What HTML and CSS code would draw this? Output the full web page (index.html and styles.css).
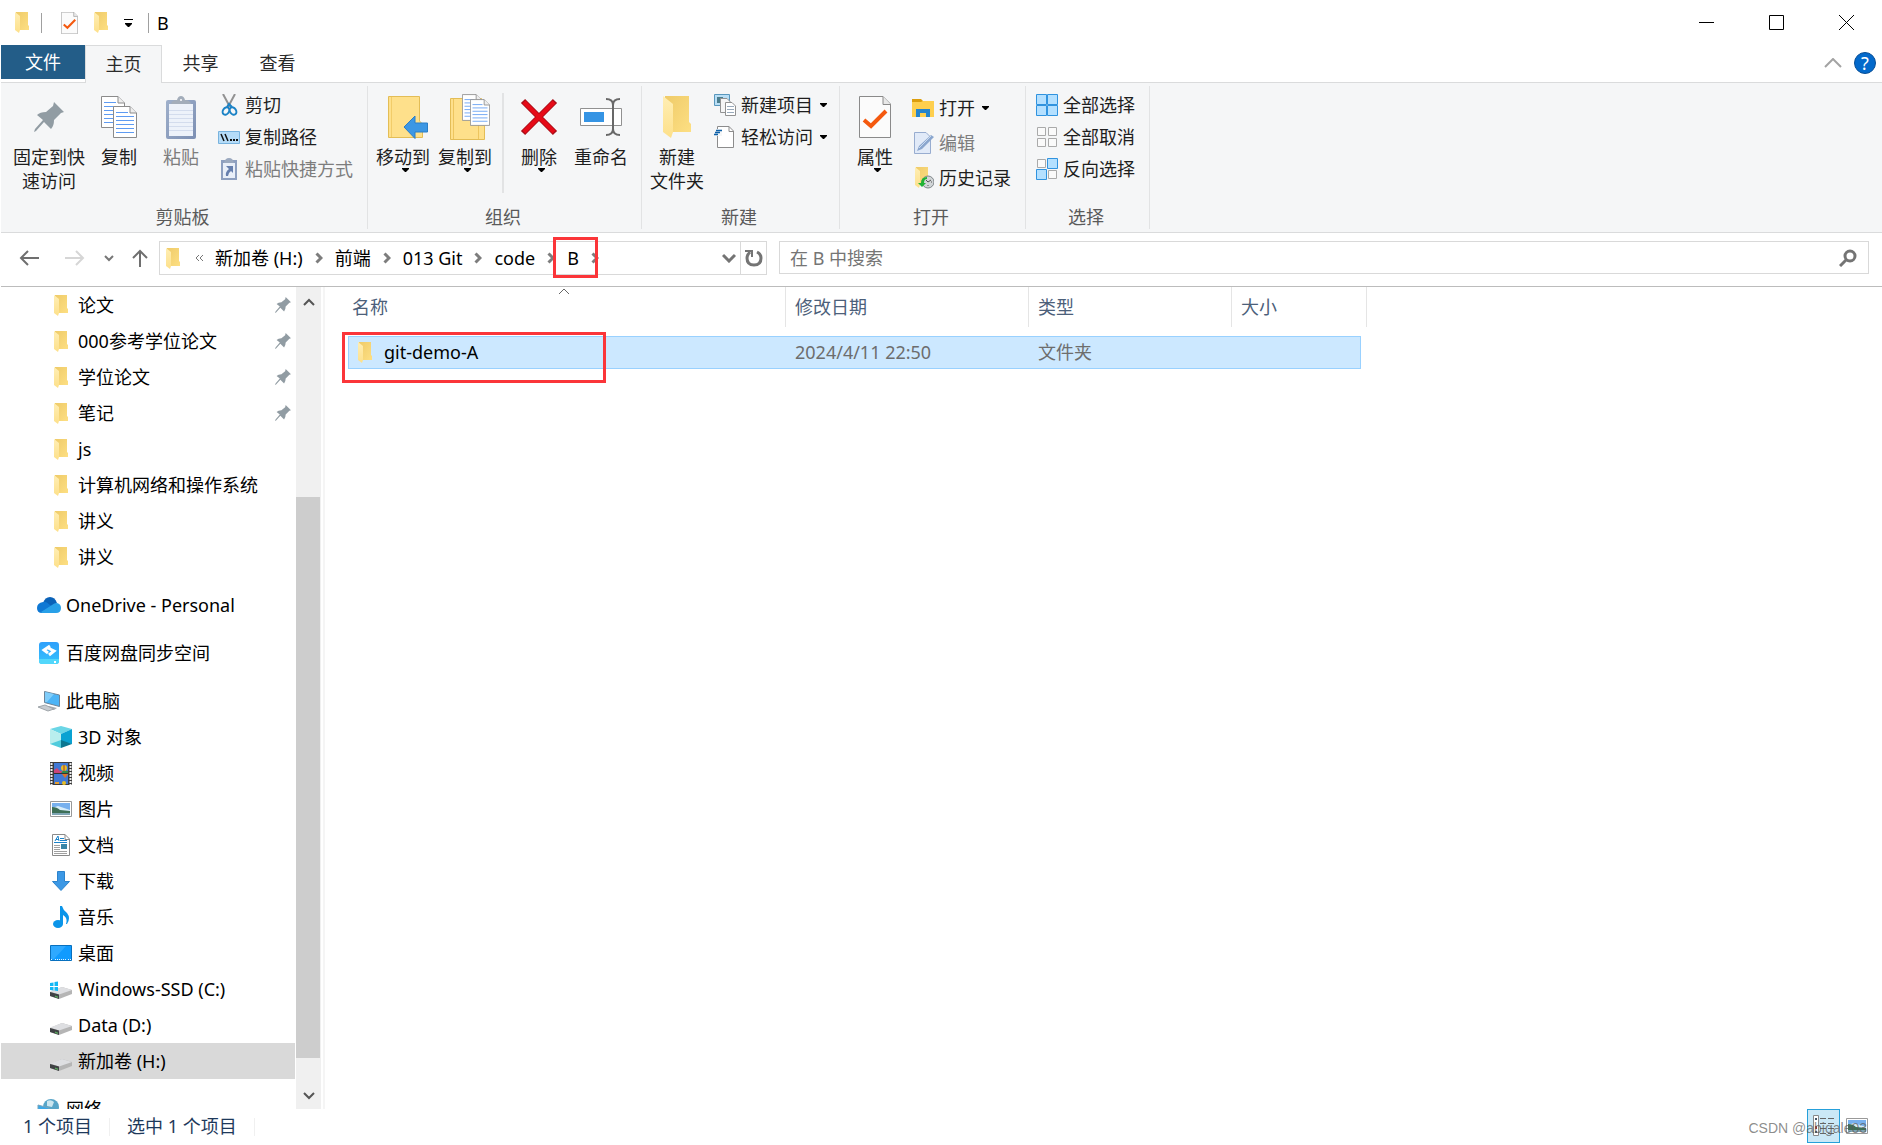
FILE: index.html
```html
<!DOCTYPE html>
<html lang="zh-CN">
<head>
    <meta charset="UTF-8">
    <meta name="viewport" content="width=device-width, initial-scale=1.0">
    <title>B</title>
    <link rel="stylesheet" href="styles.css">
</head>
<body>
    <!-- shared icons -->
    <svg class="defs" width="0" height="0">
        <defs>
            <linearGradient id="gFolder" x1="0" y1="0" x2="1" y2="1">
                <stop offset="0" stop-color="#efcb69"/>
                <stop offset="1" stop-color="#fddf83"/>
            </linearGradient>
            <linearGradient id="gFlap" x1="0" y1="0" x2="0" y2="1">
                <stop offset="0" stop-color="#ffeeb4"/>
                <stop offset="1" stop-color="#fde08a"/>
            </linearGradient>
            <linearGradient id="gClip" x1="0" y1="0" x2="1" y2="1">
                <stop offset="0" stop-color="#9fb0cb"/>
                <stop offset="1" stop-color="#7c8fb3"/>
            </linearGradient>
            <linearGradient id="gDisk" x1="0" y1="0" x2="0" y2="1">
                <stop offset="0" stop-color="#2fa0fb"/>
                <stop offset="1" stop-color="#35c2fd"/>
            </linearGradient>
        </defs>
        <symbol id="folder" viewBox="0 0 14 21">
            <path d="M1 0H13V13L14 14V18H5L1 14Z" fill="url(#gFolder)"/>
            <path d="M0 0L5 4V18L4 21L0 18Z" fill="url(#gFlap)"/>
        </symbol>
        <symbol id="pin" viewBox="0 0 30 30">
            <path d="M20 0L30 10L27 11L20 18Q20 24 17 27L10 20L2 29L0 30L1 27L9 18L3 13Q6 10 12 10L19 4Z" fill="#919ca3"/>
        </symbol>
        <symbol id="page" viewBox="0 0 24 32">
            <path d="M.5 .5H17L23.500 7V31.500H.5Z" fill="#fff" stroke="#8b8b8b"/>
            <path d="M17 .5V7H23.500" fill="#eee" stroke="#8b8b8b"/>
            <path d="M3 6.500H15M3 10.500H21M3 14.500H21M3 18.500H21M3 22.500H21M3 26.500H21" stroke="#5e9bf2" fill="none"/>
        </symbol>
        <symbol id="checkpage" viewBox="0 0 32 42">
            <path d="M.5 .5H24L31.500 8V41.500H.5Z" fill="#fbfbfb" stroke="#8a8a8a"/>
            <path d="M24 .5V8.500H31.500" fill="#e8e8e8" stroke="#8a8a8a"/>
            <path d="M5 24L12 30L27 15" fill="none" stroke="#f4590f" stroke-width="4"/>
        </symbol>
        <symbol id="caret" viewBox="0 0 7 4">
            <path d="M0 0H7V1L4 4H3L0 1Z" fill="#000"/>
        </symbol>
        <symbol id="crumb" viewBox="0 0 8 12">
            <path d="M1.500 1.500L6 6L1.500 10.500" fill="none" stroke="#7d7d7d" stroke-width="3"/>
        </symbol>
        <symbol id="drive" viewBox="0 0 22 12">
            <path d="M0 5L12 0L22 3V7L9 12L0 9Z" fill="#b5b5b5"/>
            <path d="M0 4.500L12 0L22 3L9 7.500Z" fill="#dedfe2"/>
            <path d="M0 5L9 7.500V12L0 9Z" fill="#3f4144"/>
            <path d="M5 8.500L8 9.500V11L5 10Z" fill="#59a35d"/>
        </symbol>
        <symbol id="photo" viewBox="0 0 22 16">
            <path d="M.5 .5H21.500V15.500H.5Z" fill="#fff" stroke="#999"/>
            <path d="M2 2H20V14H2Z" fill="#77b0ee"/>
            <path d="M2 7L8 5L20 9V11H2Z" fill="#d6ecfa"/>
            <path d="M2 6Q7 6 10 9L20 10V12H2Z" fill="#3d6f57"/>
            <path d="M2 12H20V14H2Z" fill="#7ea5b4"/>
        </symbol>
    </svg>

    <header class="titlebar">
        <svg class="folder"><use href="#folder"/></svg>
        <span class="title-sep"></span>
        <button class="quick" aria-label="属性"><svg width="17" height="22"><use href="#checkpage"/></svg></button>
        <button class="quick" aria-label="新建文件夹"><svg class="folder"><use href="#folder"/></svg></button>
        <button class="quick" aria-label="自定义快速访问工具栏"><svg width="9" height="8"><path d="M0 0H9V1H0ZM1 4H8V5L5 8H4L1 5Z"/></svg></button>
        <span class="title-sep"></span>
        <span class="title">B</span>
        <div class="window-buttons">
            <button aria-label="最小化"><svg width="15" height="15"><path d="M0 7.500H15" stroke="#000"/></svg></button>
            <button aria-label="最大化"><svg width="15" height="15"><path d="M.5 .5H14.500V14.500H.5Z" stroke="#000" fill="none"/></svg></button>
            <button aria-label="关闭"><svg width="15" height="15"><path d="M0 0L15 15M15 0L0 15" stroke="#000"/></svg></button>
        </div>
    </header>

    <nav class="tabs">
        <button class="tab tab-file">文件</button>
        <button class="tab tab-active">主页</button>
        <button class="tab">共享</button>
        <button class="tab">查看</button>
        <div class="tabs-right">
            <button aria-label="最小化功能区"><svg width="18" height="10"><path d="M1 9L9 1L17 9" fill="none" stroke="#a3a3a3" stroke-width="2"/></svg></button>
            <button class="help" aria-label="帮助">?</button>
        </div>
    </nav>

    <section class="ribbon">
        <div class="group">
            <div class="group-body group-clip">
                <button class="big big-wide">
                    <span class="big-icon"><svg width="30" height="30"><use href="#pin"/></svg></span>固定到快<br>速访问
                </button>
                <button class="big">
                    <span class="big-icon"><svg width="36" height="42"><use href="#page" width="24" height="32"/><use href="#page" x="12" y="10" width="24" height="32"/></svg></span>复制
                </button>
                <button class="big" disabled>
                    <span class="big-icon"><svg width="30" height="43">
                        <path d="M2 4H28Q30 4 30 6V41Q30 43 28 43H2Q0 43 0 41V6Q0 4 2 4Z" fill="url(#gClip)"/>
                        <path d="M3 8H27V40H3Z" fill="#edf2fa"/>
                        <path d="M3 14.500H27M3 18.500H27M3 22.500H27M3 26.500H27M3 30.500H27M3 34.500H27" stroke="#d3dced"/>
                        <path d="M5 8Q6 4 11 4Q12 0 15 0Q18 0 19 4Q24 4 25 8Z" fill="#a3adba"/>
                        <circle cx="15" cy="4" r="1" fill="#fff"/>
                    </svg></span>粘贴
                </button>
                <div class="small-list">
                    <button class="small">
                        <svg width="22" height="22"><path d="M5 0L12 13M17 0L10 13" stroke="#929292" stroke-width="2"/><ellipse cx="8" cy="17" rx="3" ry="4" transform="rotate(35 8 17)" fill="none" stroke="#1c83c6" stroke-width="2"/><ellipse cx="15" cy="17" rx="3" ry="4" transform="rotate(-35 15 17)" fill="none" stroke="#1c83c6" stroke-width="2"/><path d="M9 13L11 10L14 13" fill="none" stroke="#1c83c6" stroke-width="2"/></svg>剪切
                    </button>
                    <button class="small">
                        <svg width="22" height="22"><path d="M.5 5.500H21.500V17.500H.5Z" fill="#b5dcf8" stroke="#78b3de"/><path d="M3 8L6 15M7 8L10 15" stroke="#111" stroke-width="1.500"/><path d="M12 14H14M15 14H17M18 14H20" stroke="#111" stroke-width="2"/></svg>复制路径
                    </button>
                    <button class="small" disabled>
                        <svg width="22" height="22"><path d="M3 2H19V22H3Z" fill="#8d9fc0"/><path d="M5 5H17V20H5Z" fill="#e9eff9"/><path d="M6 5Q7 0 11 0Q15 0 16 5Z" fill="#9ba9bf"/><path d="M8 8H15V15L13 13Q10 15 10 18H8Q7 14 11 11Z" fill="#667fae"/></svg>粘贴快捷方式
                    </button>
                </div>
            </div>
            <div class="group-name">剪贴板</div>
        </div>

        <div class="group">
            <div class="group-body group-organize">
                <button class="big">
                    <span class="big-icon"><svg width="50" height="44" viewBox="-10 0 50 44">
                        <path d="M.5 1.500H31.500V26L34.500 29V42.500H.5Z" fill="#fee08b" stroke="#e3bd56"/><path d="M3.500 2V42" stroke="#f2cc69"/>
                        <path d="M16 32L27 21V28H39.500V37H27V43.500Z" fill="#3c97e4" stroke="#2b7ec7"/>
                    </svg></span>移动到<svg class="caret"><use href="#caret"/></svg>
                </button>
                <button class="big">
                    <span class="big-icon"><svg width="50" height="46" viewBox="-10 0 50 46">
                        <path d="M.5 4.500H31.500V29L34.500 32V45.500H.5Z" fill="#fee08b" stroke="#e3bd56"/><path d="M3.500 5V45M28.500 30V45" stroke="#edc55f"/>
                        <use href="#page" x="12" y="0" width="20" height="27"/><use href="#page" x="20" y="5" width="20" height="27"/>
                    </svg></span>复制到<svg class="caret"><use href="#caret"/></svg>
                </button>
                <span class="group-sep"></span>
                <button class="big">
                    <span class="big-icon"><svg width="38" height="38"><path d="M3 3L35 35M35 3L3 35" stroke="#a90d17" stroke-width="6"/><path d="M4 4L34 34M34 4L4 34" stroke="#e60a17" stroke-width="4"/></svg></span>删除<svg class="caret"><use href="#caret"/></svg>
                </button>
                <button class="big">
                    <span class="big-icon"><svg width="42" height="38"><path d="M.5 10.500H41.500V27.500H.5Z" fill="#fff" stroke="#919191"/><path d="M4 14H24V24H4Z" fill="#3594e4"/><path d="M26 1Q33 1 33 7V31Q33 37 26 37M40 1Q33 1 33 7M33 31Q33 37 40 37" fill="none" stroke="#686868" stroke-width="2"/></svg></span>重命名
                </button>
            </div>
            <div class="group-name">组织</div>
        </div>

        <div class="group">
            <div class="group-body group-new">
                <button class="big">
                    <span class="big-icon"><svg width="28" height="42"><use href="#folder"/></svg></span>新建<br>文件夹
                </button>
                <div class="small-list">
                    <button class="small">
                        <svg width="22" height="22"><path d="M.5 .5H15.500V11.500H.5Z" fill="#b9def5" stroke="#5897bd"/><path d="M3 3H9V9H3Z" fill="#4b7d8e"/><path d="M6.500 4.500H13L17.500 9V18.500H6.500Z" fill="#f5f5f5" stroke="#929292"/><path d="M11.500 8.500H18L21.500 12V21.500H11.500Z" fill="#fff" stroke="#929292"/><path d="M13 12.500H20M13 15.500H20M13 18.500H20" stroke="#9ab"/></svg>新建项目<svg class="caret"><use href="#caret"/></svg>
                    </button>
                    <button class="small">
                        <svg width="22" height="22"><path d="M3.500 .5H15L19.500 5V21.500H3.500Z" fill="#fff" stroke="#8c8c8c"/><path d="M15 .5V5.500H19.500" fill="none" stroke="#8c8c8c"/><path d="M0 3H8V10H0Z" fill="#f5f6f7"/><path d="M2 4.500H8M1 6.500H6M0 8.500H4" stroke="#0d60a8" stroke-width="1.500"/></svg>轻松访问<svg class="caret"><use href="#caret"/></svg>
                    </button>
                </div>
            </div>
            <div class="group-name">新建</div>
        </div>

        <div class="group">
            <div class="group-body group-open">
                <button class="big">
                    <span class="big-icon"><svg width="32" height="42"><use href="#checkpage"/></svg></span>属性<svg class="caret"><use href="#caret"/></svg>
                </button>
                <div class="small-list small-list-tall">
                    <button class="small">
                        <svg width="22" height="22"><path d="M0 2H9L11 4V8H0Z" fill="#dc9e0d"/><path d="M0 5H9L11 4H22V20H0Z" fill="#fecf4e"/><path d="M4 20V12H18V20H14V16H8V20Z" fill="#2584cc"/></svg>打开<svg class="caret"><use href="#caret"/></svg>
                    </button>
                    <button class="small" disabled>
                        <svg width="22" height="22"><path d="M2.500 .5H14L18.500 5V21.500H2.500Z" fill="#e1eaf8" stroke="#98add0"/><path d="M5 19L7 14L19 3L22 5L10 17Z" fill="#8aa6ce"/><path d="M7 16L19 4" stroke="#c9daf0"/></svg>编辑
                    </button>
                    <button class="small">
                        <svg width="22" height="22"><use href="#folder" x="3" width="14" height="21"/><circle cx="16" cy="15" r="6" fill="#d1d5d7" stroke="#7d8488"/><path d="M14 13L16 15L19 13M16 19V18M20 15H19" stroke="#555" fill="none"/><path d="M15 10Q9 10 9 16H6L10 20L14 16H12Q12 12 15 12Z" fill="#20b334"/></svg>历史记录
                    </button>
                </div>
            </div>
            <div class="group-name">打开</div>
        </div>

        <div class="group">
            <div class="group-body group-select">
                <div class="small-list">
                    <button class="small">
                        <svg width="22" height="22"><g fill="#b4e0ff" stroke="#3093df"><path d="M.5 .5H10.500V10.500H.5ZM11.500 .5H21.500V10.500H11.500ZM.5 11.500H10.500V21.500H.5ZM11.500 11.500H21.500V21.500H11.500Z"/></g></svg>全部选择
                    </button>
                    <button class="small">
                        <svg width="22" height="22"><g fill="#fafafa" stroke="#aaa"><path d="M1.500 1.500H9.500V9.500H1.500ZM12.500 1.500H20.500V9.500H12.500ZM1.500 12.500H9.500V20.500H1.500ZM12.500 12.500H20.500V20.500H12.500Z"/></g></svg>全部取消
                    </button>
                    <button class="small">
                        <svg width="22" height="22"><path d="M1.500 1.500H9.500V9.500H1.500ZM12.500 12.500H20.500V20.500H12.500Z" fill="#fafafa" stroke="#aaa"/><path d="M11.500 .5H21.500V10.500H11.500ZM.5 11.500H10.500V21.500H.5Z" fill="#b4e0ff" stroke="#3093df"/></svg>反向选择
                    </button>
                </div>
            </div>
            <div class="group-name">选择</div>
        </div>
    </section>

    <section class="addressbar">
        <div class="history">
            <button aria-label="后退"><svg width="20" height="16"><path d="M20 8H2M9 1L2 8L9 15" fill="none" stroke="#6f6f6f" stroke-width="2"/></svg></button>
            <button aria-label="前进"><svg width="20" height="16"><path d="M0 8H18M11 1L18 8L11 15" fill="none" stroke="#d6d6d6" stroke-width="2"/></svg></button>
            <button class="narrow" aria-label="最近浏览的位置"><svg width="10" height="8"><path d="M1 2L5 6L9 2" fill="none" stroke="#777" stroke-width="2"/></svg></button>
            <button class="up" aria-label="上移"><svg width="16" height="18"><path d="M8 18V2M1 9L8 2L15 9" fill="none" stroke="#6f6f6f" stroke-width="2"/></svg></button>
        </div>
        <div class="path">
            <svg class="folder"><use href="#folder"/></svg>
            <svg class="more" width="9" height="8"><path d="M4 1L1 4L4 7M8 1L5 4L8 7" fill="none" stroke="#777"/></svg>
            <a href="#">新加卷 (H:)</a><svg class="crumb"><use href="#crumb"/></svg>
            <a href="#">前端</a><svg class="crumb"><use href="#crumb"/></svg>
            <a href="#">013 Git</a><svg class="crumb"><use href="#crumb"/></svg>
            <a href="#">code</a><svg class="crumb"><use href="#crumb"/></svg>
            <span class="current"><a href="#">B</a><svg class="crumb"><use href="#crumb"/></svg><span class="mark mark-path"></span></span>
            <button class="path-drop" aria-label="以前的位置"><svg width="14" height="10"><path d="M1 2L7 8L13 2" fill="none" stroke="#747474" stroke-width="3"/></svg></button>
            <button class="refresh" aria-label="刷新"><svg width="18" height="18"><path d="M12 3Q16 5 16 9Q16 16 9 16Q2 16 2 9Q2 6 5 3" fill="none" stroke="#747474" stroke-width="3"/><path d="M0 2H7V8" fill="none" stroke="#747474" stroke-width="2"/></svg></button>
        </div>
        <div class="search">
            <input type="text" aria-label="搜索" placeholder="在 B 中搜索">
            <svg width="18" height="18"><circle cx="11" cy="7" r="5" fill="none" stroke="#747474" stroke-width="3"/><path d="M8 10L1 17" stroke="#747474" stroke-width="3"/></svg>
        </div>
    </section>

    <main class="content">
        <nav class="tree">
            <a class="item sub" href="#"><span class="icon"><svg class="folder"><use href="#folder"/></svg></span>论文<svg class="pinned"><use href="#pin"/></svg></a>
            <a class="item sub" href="#"><span class="icon"><svg class="folder"><use href="#folder"/></svg></span>000参考学位论文<svg class="pinned"><use href="#pin"/></svg></a>
            <a class="item sub" href="#"><span class="icon"><svg class="folder"><use href="#folder"/></svg></span>学位论文<svg class="pinned"><use href="#pin"/></svg></a>
            <a class="item sub" href="#"><span class="icon"><svg class="folder"><use href="#folder"/></svg></span>笔记<svg class="pinned"><use href="#pin"/></svg></a>
            <a class="item sub" href="#"><span class="icon"><svg class="folder"><use href="#folder"/></svg></span>js</a>
            <a class="item sub" href="#"><span class="icon"><svg class="folder"><use href="#folder"/></svg></span>计算机网络和操作系统</a>
            <a class="item sub" href="#"><span class="icon"><svg class="folder"><use href="#folder"/></svg></span>讲义</a>
            <a class="item sub" href="#"><span class="icon"><svg class="folder"><use href="#folder"/></svg></span>讲义</a>

            <a class="item root" href="#"><span class="icon"><svg width="24" height="16"><path d="M6 6Q8 0 13 0Q18 0 20 6L12 11Z" fill="#0a62b8"/><path d="M5 16Q0 16 0 11Q0 6 6 5Q9 4 13 8L19 12L8 16Z" fill="#0f78d4"/><path d="M4 15L15 8Q17 6 20 6Q24 7 24 11Q24 16 19 16H5Z" fill="#28a0e8"/></svg></span>OneDrive - Personal</a>
            <a class="item root" href="#"><span class="icon"><svg width="20" height="22"><rect width="20" height="22" rx="3" fill="url(#gDisk)"/><path d="M0 17H20V19Q20 22 17 22H3Q0 22 0 19Z" fill="#52d7fb"/><path d="M15 20H17" stroke="#fff" stroke-width="2"/><path d="M11 4L5 8L9 11M9 6L15 9L10 13" fill="none" stroke="#fff" stroke-width="3"/></svg></span>百度网盘同步空间</a>
            <a class="item root" href="#"><span class="icon"><svg width="24" height="22"><path d="M7.500 1.500L22.500 5V16.500L7.500 12.500Z" fill="#4cb4f6" stroke="#6d8498"/><path d="M8 2L17 4L10 12L8 12Z" fill="#80cdfa"/><path d="M12 16L20 18L17 20L10 17Z" fill="#a8adb2"/><path d="M1 17L8 15L17 19L11 21Z" fill="#c7ccd1" stroke="#9fa5aa"/></svg></span>此电脑</a>
            <a class="item sub" href="#"><span class="icon"><svg width="22" height="22"><path d="M11 0L22 3L11 8L0 3Z" fill="#6bd6e6"/><path d="M0 3L11 8V17L0 18Z" fill="#b9eeee"/><path d="M22 3L11 8V17L22 18Z" fill="#0aa2d2"/><path d="M0 18L11 14V22Z" fill="#4fcbdc"/><path d="M22 18L11 14V22Z" fill="#0b7791"/></svg></span>3D 对象</a>
            <a class="item sub" href="#"><span class="icon"><svg width="22" height="23"><path d="M0 0H22V23H0Z" fill="#3c3c3c"/><path d="M1.500 1V23M20.500 1V23" stroke="#eee" stroke-width="2" stroke-dasharray="2 1"/><path d="M4 1H18V11H4ZM4 12H18V22H4Z" fill="#4078d4"/><circle cx="14" cy="6" r="3" fill="#e6bd28"/><path d="M13.500 3H14.500V9H13.500Z" fill="#a53a28"/><path d="M4 8L7 6L10 9H12V11H4Z" fill="#c9457b"/><path d="M13 9H18V11H11Z" fill="#2f8a4a"/><path d="M12 12H18L15 16Z" fill="#dc7328"/><circle cx="14" cy="21" r="2" fill="#e6bd28"/><path d="M5 20H9V22H5Z" fill="#e6a032"/><path d="M4 11.500H18" stroke="#333"/></svg></span>视频</a>
            <a class="item sub" href="#"><span class="icon"><svg width="22" height="16"><use href="#photo"/></svg></span>图片</a>
            <a class="item sub" href="#"><span class="icon"><svg width="18" height="22"><path d="M.5 .5H13L17.500 5V21.500H.5Z" fill="#fff" stroke="#8a8a8a"/><path d="M13 .5V5.500H17.500" fill="none" stroke="#8a8a8a"/><path d="M3 7L6 2L7 7M4 5.500H7M8 4.500H12M8 6.500H15M2 8.500H15" fill="none" stroke="#1b83c9"/><path d="M2 11.500H8M2 13.500H8M2 15.500H8M2 17.500H15M2 19.500H15" stroke="#a0a0a0"/><path d="M9 10H15V15H9Z" fill="#3986a8"/></svg></span>文档</a>
            <a class="item sub" href="#"><span class="icon"><svg width="20" height="20"><path d="M6.500 .5H13.500V10.500H18.500L10 19.500L1.500 10.500H6.500Z" fill="#3c98e5" stroke="#2c83cc"/></svg></span>下载</a>
            <a class="item sub" href="#"><span class="icon"><svg width="18" height="22"><ellipse cx="6" cy="18" rx="5" ry="4" fill="#0b95e9"/><path d="M8 0H10Q11 4 15 7Q19 12 15 18H14Q16 12 11 9V18H8Z" fill="#0b95e9"/></svg></span>音乐</a>
            <a class="item sub" href="#"><span class="icon"><svg width="22" height="16"><path d="M.5 .5H21.500V15.500H.5Z" fill="#109bff" stroke="#0870be"/><path d="M1 1H16L4 14H1Z" fill="#2fa9ff"/><path d="M1 14.500H3M5 14.500H17M18 14.500H21" stroke="#e6f5ff" stroke-dasharray="1 1"/></svg></span>桌面</a>
            <a class="item sub" href="#"><span class="icon"><svg width="22" height="22"><use href="#drive" y="9" width="22" height="12"/><path d="M0 5L3.500 4.500V8H0ZM4.500 4L8 3.500V8H4.500ZM0 9H3.500V12.500L0 12ZM4.500 9H8V13L4.500 12.500Z" fill="#12b7f5"/></svg></span>Windows-SSD (C:)</a>
            <a class="item sub" href="#"><span class="icon"><svg width="22" height="22"><use href="#drive" y="9" width="22" height="12"/></svg></span>Data (D:)</a>
            <a class="item sub selected" href="#"><span class="icon"><svg width="22" height="22"><use href="#drive" y="9" width="22" height="12"/></svg></span>新加卷 (H:)</a>
            <a class="item root" href="#"><span class="icon"><svg width="24" height="22"><circle cx="14" cy="9" r="8" fill="#57a5c8"/><path d="M10 3Q14 1 17 4L15 9L10 8Z" fill="#cbe6ef"/><path d="M1 7L12 10V20L1 18Z" fill="#3ba8e8" stroke="#75a4bc"/></svg></span>网络</a>
        </nav>
        <div class="scrollbar">
            <svg width="12" height="8"><path d="M1 7L6 2L11 7" fill="none" stroke="#555" stroke-width="2"/></svg>
            <div class="track"><div class="thumb"></div></div>
            <svg width="12" height="8"><path d="M1 1L6 6L11 1" fill="none" stroke="#555" stroke-width="2"/></svg>
        </div>
        <div class="files">
            <table>
                <colgroup><col class="col-name"><col class="col-date"><col class="col-type"><col class="col-size"><col class="col-end"></colgroup>
                <thead>
                    <tr>
                        <th>名称<svg class="sort" width="12" height="7"><path d="M1 6L6 1L11 6" fill="none" stroke="#666"/></svg></th>
                        <th>修改日期</th>
                        <th>类型</th>
                        <th colspan="2">大小</th>
                    </tr>
                </thead>
                <tbody>
                    <tr>
                        <td><div class="name"><svg class="folder"><use href="#folder"/></svg>git-demo-A</div><span class="mark mark-file"></span></td>
                        <td>2024/4/11 22:50</td>
                        <td>文件夹</td>
                        <td></td>
                    </tr>
                </tbody>
            </table>
        </div>
    </main>

    <footer class="statusbar">
        <span class="status">1 个项目</span>
        <span class="status">选中 1 个项目</span>
        <div class="views">
            <button class="view view-active" aria-label="详细信息"><svg width="24" height="22"><path d="M1.500 .5H6.500V20.500H1.500Z" fill="#fff" stroke="#888"/><path d="M3 3H5V5H3ZM3 16H5V18H3Z" fill="#456"/><path d="M3 11H5V14H3Z" fill="#b33"/><path d="M8 3.500H14M16 3.500H22M8 8.500H14M16 8.500H22M8 13.500H14M16 13.500H22M8 18.500H14M16 18.500H22" stroke="#666"/></svg></button>
            <button class="view" aria-label="大缩略图"><svg width="22" height="16"><use href="#photo"/></svg></button>
            <span class="credit">CSDN @abigale03</span>
        </div>
    </footer>
</body>
</html>
```

FILE: styles.css
```css
* {
    box-sizing: border-box;
}
body {
    display: flex;
    flex-direction: column;
    height: 100vh;
    margin: 0;
    padding-left: 1px;
    overflow: hidden;
    background-color: #fff;
    color: #000;
    font-family: "Noto Sans", "Noto Sans CJK SC", sans-serif;
    font-size: 18px;
    line-height: 24px;
}
button {
    display: flex;
    align-items: center;
    justify-content: center;
    padding: 0;
    border: none;
    background: none;
    color: inherit;
    font: inherit;
}
a {
    color: inherit;
    text-decoration: none;
}
svg {
    display: block;
    flex: none;
}
.defs {
    position: absolute;
}
.folder {
    width: 14px;
    height: 21px;
}
.caret {
    width: 7px;
    height: 4px;
}

/* title bar */
.titlebar {
    display: flex;
    align-items: center;
    height: 45px;
    padding-left: 14px;
}
.title-sep {
    width: 1px;
    height: 20px;
    margin: 0 8px 0 12px;
    background-color: #a0a0a0;
}
.quick {
    margin-left: 11px;
}
.quick + .quick {
    margin-left: 16px;
}
.quick + .title-sep {
    margin-left: 15px;
}
.window-buttons {
    display: flex;
    align-self: stretch;
    margin-left: auto;
    padding-right: 1px;
}
.window-buttons button {
    width: 70px;
}

/* tabs */
.tabs {
    display: flex;
    height: 38px;
    border-bottom: 1px solid #dadbdc;
}
.tab {
    width: 77px;
    height: 37px;
    padding-bottom: 2px;
    color: #2b2b2b;
}
.tab-file {
    width: 84px;
    height: 34px;
    padding-bottom: 0;
    background-color: #235d88;
    color: #fff;
}
.tab-active {
    height: 38px;
    border: 1px solid #dadbdc;
    border-bottom: none;
    background-color: #f5f6f7;
}
.tabs-right {
    display: flex;
    align-items: center;
    gap: 12px;
    margin-left: auto;
    padding: 0 6px 2px 0;
}
.help {
    width: 22px;
    height: 22px;
    border: 1px solid #0a4f96;
    border-radius: 50%;
    background-color: #0369cb;
    color: #fff;
}

/* ribbon */
.ribbon {
    display: flex;
    height: 150px;
    padding: 3px 0;
    border-bottom: 1px solid #dadbdc;
    background-color: #f5f6f7;
    color: #1e1e1e;
}
.group {
    display: flex;
    flex-direction: column;
    border-right: 1px solid #e2e3e4;
}
.group-body {
    display: flex;
    flex: 1;
    align-items: flex-start;
}
.group-clip {
    padding: 0 14px 0 9px;
}
.group-organize {
    padding: 0 9px 0 4px;
}
.group-new {
    padding: 0 12px 0 4px;
}
.group-open {
    padding: 0 14px 0 4px;
}
.group-select {
    padding: 0 14px 0 4px;
}
.group-name {
    padding-right: 3px;
    text-align: center;
    color: #5a5a5a;
}
.group-sep {
    width: 2px;
    height: 100px;
    margin: 7px 4px 0 6px;
    background-color: #e2e3e4;
}
.big {
    display: block;
    width: 62px;
    text-align: center;
    white-space: nowrap;
}
.big-wide {
    width: 78px;
}
.big:disabled,
.small:disabled {
    color: #7d7d7d;
}
.big-icon {
    display: flex;
    align-items: center;
    justify-content: center;
    height: 59px;
    padding-top: 3px;
}
.big .caret {
    width: 11px;
    margin: -1px auto 0;
    padding-left: 4px;
}
.small-list {
    display: flex;
    flex-direction: column;
    padding: 3px 0 0 6px;
}
.small {
    justify-content: flex-start;
    gap: 5px;
    height: 32px;
}
.small .caret {
    margin-left: 2px;
}
.small-list-tall {
    padding-top: 4px;
}
.small-list-tall .small {
    height: 35px;
}

/* address bar */
.addressbar {
    display: flex;
    align-items: flex-start;
    height: 54px;
    padding: 8px 13px 0 0;
    border-bottom: 1px solid #bcbcbc;
}
.history {
    display: flex;
    align-items: center;
    width: 158px;
    height: 34px;
    padding-left: 18px;
}
.history button {
    width: 20px;
    margin-right: 26px;
}
.history .narrow {
    width: 10px;
    margin: 0 18px 0 -7px;
}
.history .up {
    width: 16px;
    margin: 0;
}
.path {
    display: flex;
    align-items: center;
    width: 608px;
    height: 34px;
    padding-left: 6px;
    border: 1px solid #d9d9d9;
}
.more {
    margin: 0 11px 0 15px;
}
.crumb {
    width: 8px;
    height: 12px;
    margin: 0 12px;
}
.current {
    position: relative;
    display: flex;
    align-items: center;
}
.path-drop {
    width: 22px;
    height: 32px;
    margin-left: auto;
}
.refresh {
    width: 26px;
    height: 32px;
    border-left: 1px solid #d9d9d9;
}
.search {
    display: flex;
    flex: 1;
    align-items: center;
    height: 33px;
    margin-left: 12px;
    padding: 0 11px 0 10px;
    border: 1px solid #d9d9d9;
}
.search input {
    flex: 1;
    padding: 0;
    border: none;
    outline: none;
    font: inherit;
}
.search input::placeholder {
    color: #757575;
}

/* red highlight frames */
.mark {
    position: absolute;
    border: 3px solid #fb3539;
}
.mark-path {
    top: -9px;
    left: -14px;
    width: 45px;
    height: 41px;
}
.mark-file {
    top: -5px;
    left: -7px;
    width: 264px;
    height: 51px;
}

/* folder tree */
.content {
    display: flex;
    flex: 1;
    min-height: 0;
}
.tree {
    width: 294px;
    overflow: hidden;
}
.item {
    display: flex;
    align-items: center;
    height: 36px;
    white-space: nowrap;
}
.sub {
    padding-left: 48px;
}
.root {
    margin-top: 12px;
    padding-left: 36px;
}
.icon {
    display: flex;
    justify-content: center;
    width: 24px;
    margin-right: 5px;
}
.pinned {
    width: 16px;
    height: 16px;
    margin: 0 4px 0 auto;
}
.selected {
    background-color: #d9d9d9;
}
.scrollbar {
    display: flex;
    flex-direction: column;
    align-items: center;
    width: 25px;
    margin: 0 2px 0 1px;
    padding: 11px 0 9px;
    background-color: #f0f0f0;
}
.track {
    flex: 1;
    align-self: stretch;
    margin: 6px 1px 8px 0;
    padding-top: 185px;
}
.thumb {
    height: calc(100% - 26px);
    background-color: #cdcdcd;
}

/* file list */
.files {
    flex: 1;
    padding-left: 23px;
    border-left: 2px solid #f5f5f5;
}
table {
    width: 1019px;
    table-layout: fixed;
    border-collapse: separate;
    border-spacing: 0;
}
.col-name {
    width: 438px;
}
.col-date {
    width: 243px;
}
.col-type {
    width: 203px;
}
.col-size {
    width: 129px;
}
.col-end {
    width: 6px;
}
th {
    position: relative;
    height: 40px;
    padding: 0 0 0 9px;
    border-right: 1px solid #e5e5e5;
    color: #4c607a;
    font-weight: normal;
    text-align: left;
}
th:first-child {
    padding-left: 4px;
}
.sort {
    position: absolute;
    top: 1px;
    left: 210px;
}
tbody::before {
    content: "";
    display: block;
    height: 9px;
}
td {
    position: relative;
    height: 33px;
    padding: 0 0 1px 9px;
    border: solid #99d1ff;
    border-width: 1px 0;
    background-color: #cce8ff;
    color: #6d6d6d;
}
td:first-child {
    border-left-width: 1px;
    color: #000;
}
td:last-child {
    border-right-width: 1px;
}
.name {
    display: flex;
    align-items: center;
    gap: 12px;
}

/* status bar */
.statusbar {
    display: flex;
    align-items: flex-start;
    height: 36px;
    padding-left: 5px;
    color: #1e395b;
}
.status {
    height: 18px;
    margin-top: 9px;
    padding: 0 17px;
    border-right: 1px solid #f0f0f0;
    line-height: 16px;
}
.views {
    position: relative;
    display: flex;
    margin-left: auto;
    padding-right: 8px;
}
.view {
    width: 34px;
    height: 34px;
}
.view-active {
    width: 33px;
    border: 1px solid #26a0da;
    background-color: #cbe8f6;
}
.credit {
    position: absolute;
    top: 10px;
    right: 15px;
    color: rgba(90, 90, 90, 0.7);
    font-family: "Liberation Sans", sans-serif;
    font-size: 14px;
    line-height: 18px;
    white-space: nowrap;
}
```
